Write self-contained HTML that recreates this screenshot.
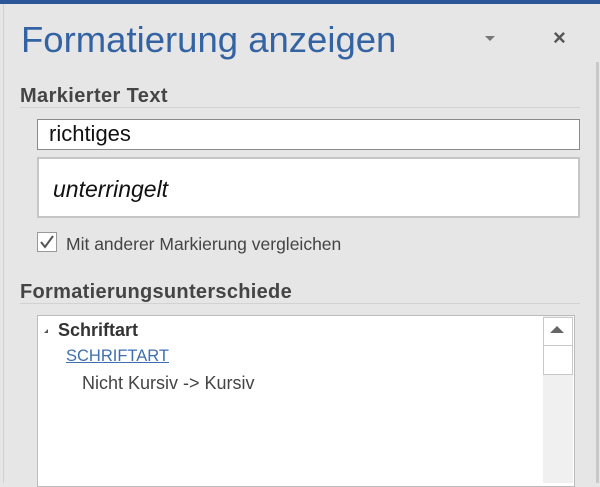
<!DOCTYPE html><html><head><style>
body{margin:0;width:600px;height:483px;background:#e6e6e6;position:relative;overflow:hidden;font-family:"Liberation Sans",sans-serif}
div,span{position:absolute;white-space:nowrap}
</style></head><body>
<div style="left:0;top:0;width:600px;height:4px;background:#2b579a"></div>
<div style="left:3px;top:4px;width:1px;height:479px;background:#d0d0d0"></div>
<div style="left:596px;top:62px;width:3px;height:421px;background:#c8c8c8"></div>
<span style="left:21px;top:20px;font-size:36.5px;color:#3463a3;line-height:40px">Formatierung anzeigen</span>
<div style="left:485px;top:36px;width:0;height:0;border-left:5px solid transparent;border-right:5px solid transparent;border-top:5px solid #777"></div>
<span style="left:553px;top:25px;font-size:22px;color:#555;font-weight:bold">×</span>
<span style="left:20px;top:84px;font-size:20px;font-weight:bold;color:#444;letter-spacing:0.4px;line-height:24px">Markierter Text</span>
<div style="left:20px;top:107px;width:560px;height:1px;background:#d2d2d2"></div>
<div style="left:37px;top:119px;width:541px;height:29px;background:#fff;border:1px solid #8a8a8a"></div>
<span style="left:49px;top:120px;font-size:22px;color:#111;line-height:28px">richtiges</span>
<div style="left:37px;top:157px;width:539px;height:57px;background:#fff;border:2px solid #c6c6c6"></div>
<span style="left:53px;top:175px;font-size:23px;font-style:italic;color:#111;line-height:28px">unterringelt</span>
<div style="left:37px;top:232px;width:18px;height:18px;background:#fff;border:1px solid #999"></div>
<svg style="position:absolute;left:38px;top:233px" width="18" height="18"><path d="M3 9 L7 14 L15 3" stroke="#555" stroke-width="2" fill="none"/></svg>
<span style="left:66px;top:233px;font-size:17.5px;color:#444;line-height:22px">Mit anderer Markierung vergleichen</span>
<span style="left:20px;top:280px;font-size:20px;font-weight:bold;color:#444;letter-spacing:0.3px;line-height:24px">Formatierungsunterschiede</span>
<div style="left:20px;top:303px;width:560px;height:1px;background:#d2d2d2"></div>
<div style="left:37px;top:315px;width:536px;height:170px;background:#fff;border:1px solid #bbb"></div>
<div style="left:543px;top:316px;width:30px;height:167px;background:#f0f0f0"></div>
<div style="left:543px;top:317px;width:28px;height:27px;background:#fff;border:1px solid #c8c8c8"></div>
<div style="left:550px;top:326px;width:0;height:0;border-left:7px solid transparent;border-right:7px solid transparent;border-bottom:7px solid #666"></div>
<div style="left:543px;top:345px;width:28px;height:28px;background:#fff;border:1px solid #c8c8c8"></div>
<div style="left:44px;top:329px;width:0;height:0;border-left:4px solid transparent;border-bottom:4px solid #555"></div>
<span style="left:58px;top:319px;font-size:18px;font-weight:bold;color:#333;line-height:22px">Schriftart</span>
<span style="left:66px;top:345px;font-size:16.5px;color:#3e6fb0;text-decoration:underline;line-height:22px">SCHRIFTART</span>
<span style="left:82px;top:372px;font-size:18px;color:#444;line-height:22px">Nicht Kursiv -&gt; Kursiv</span>
</body></html>
